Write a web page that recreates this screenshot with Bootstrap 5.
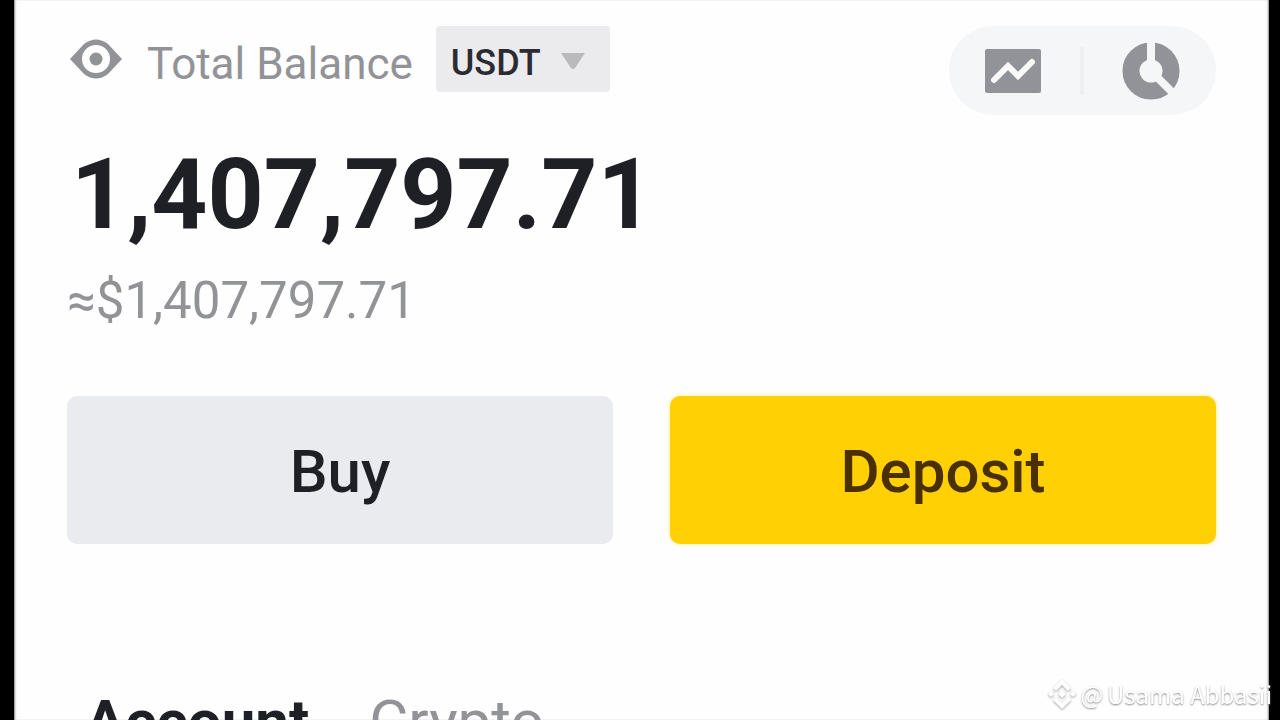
<!DOCTYPE html>
<html lang="en">
<head>
<meta charset="utf-8">
<meta name="viewport" content="width=device-width, initial-scale=1">
<title>Wallet</title>
<link href="https://cdn.jsdelivr.net/npm/bootstrap@5.3.0/dist/css/bootstrap.min.css" rel="stylesheet">
<style>
  body { font-family: Roboto, "Liberation Sans", sans-serif; color: #1e2026; background: #fefefe; }
  .wallet { border: solid #000; border-width: 0 11px 0 14px; padding: 26px 53px 0; box-shadow: inset 2px 0 2px -1px #888, inset -2px 0 2px -1px #888; }
  .muted { color: #929397; }
  .total-label { font-size: 44px; line-height: 64px; padding-top: 6px; }
  .eye-btn { padding: 12px 24px 0 2px; line-height: 0; }
  .currency { width: 174px; height: 66px; margin-left: 23px; padding: 8px 0 0 15px; border-radius: 4px;
    font-size: 36px; font-weight: 500; background-color: #ebebee; color: #2b2c31; border: 0; appearance: none; }
  .caret-mark { right: 24px; top: 26px; pointer-events: none; }
  .views { width: 267px; height: 89px; background: #f5f6f7; }
  .views .divider { width: 4px; height: 48px; background: #eeeff0; }
  .balance { font-size: 98px; line-height: 112px; margin-top: 24px; margin-left: 4px; font-weight: 700; }
  .fiat { font-size: 51px; line-height: 64px; margin-top: 18px; }
  .actions { gap: 57px; margin-top: 63px; }
  .action { height: 148px; border: 0; border-radius: 10px; font-size: 60px; font-weight: 500; padding-top: 10px; }
  .action-buy { background: #eaebef; color: #1e2026; }
  .action-deposit { background: #ffd104; color: #4a3000; box-shadow: 0 0 4px #ffe980; }
  .tabs { gap: 60px; margin-top: 144px; padding-left: 18px; font-size: 60px; line-height: 68px; }
  .tabs a { text-decoration: none; color: inherit; }
  .credit { right: 8px; bottom: 9px; font-family: "Noto Sans CJK SC", sans-serif; font-size: 24px; line-height: 34px;
    color: #fff; text-shadow: 0 1px 2px #85878c; }
  .credit svg { filter: drop-shadow(0 1px 1px #999ba0); }
</style>
</head>
<body>
<main class="wallet vh-100 overflow-hidden position-relative">
  <header class="d-flex justify-content-between align-items-start">
    <div class="d-flex align-items-start">
      <button type="button" class="btn border-0 eye-btn" aria-label="Hide balance">
        <svg width="54" height="42" viewBox="0 0 54 42"><path fill="#929397" fill-rule="evenodd" d="M1 21 15 6Q27-3 39 6L53 21 39 36Q27 45 15 36ZM27 7a14 14 0 1 0 0 28 14 14 0 1 0 0-28Z"/><circle cx="27" cy="21" r="6.5" fill="#929397"/></svg>
      </button>
      <label for="currency" class="total-label muted text-nowrap">Total Balance</label>
      <div class="position-relative">
        <select id="currency" class="currency"><option>USDT</option></select>
        <svg class="caret-mark position-absolute" width="26" height="18" viewBox="0 0 26 18"><path fill="#b9babc" d="M1 1h24L15 16q-2 2-4 0Z"/></svg>
      </div>
    </div>
    <div class="views rounded-pill d-flex align-items-center justify-content-between px-4">
      <button type="button" class="btn border-0 p-0 ms-2 ps-1 lh-1" aria-label="Profit chart">
        <svg width="56" height="44" viewBox="0 0 56 44"><rect width="56" height="44" rx="2" fill="#929398"/><path d="M9 31 23 17 33 27 47 13" fill="none" stroke="#fafafa" stroke-width="6" stroke-linecap="round"/></svg>
      </button>
      <span class="divider"></span>
      <button type="button" class="btn border-0 p-0 me-2 pe-1 lh-1" aria-label="Allocation">
        <svg width="58" height="58" viewBox="0 0 58 58"><circle cx="29" cy="29" r="20" fill="none" stroke="#929398" stroke-width="17"/><path d="M29 0V29L54 54" fill="none" stroke="#f5f6f7" stroke-width="8"/></svg>
      </button>
    </div>
  </header>
  <div class="balance">1,407,797.71</div>
  <div class="fiat muted">≈$1,407,797.71</div>
  <div class="actions d-flex">
    <button type="button" class="btn action action-buy flex-fill w-50">Buy</button>
    <button type="button" class="btn action action-deposit flex-fill w-50">Deposit</button>
  </div>
  <nav class="tabs d-flex">
    <a href="#account" class="fw-bold" aria-current="page">Account</a>
    <a href="#crypto"><span class="muted">Crypto</span></a>
  </nav>
</main>
<div class="credit position-fixed d-flex align-items-center gap-1">
  <svg width="28" height="30" viewBox="0 0 28 30" fill="#fff"><path d="M14 0 23 9 20 12 14 6 8 12 5 9ZM14 30 23 21 20 18 14 24 8 18 5 21ZM14 11 18 15 14 19 10 15ZM3 12 6 15 3 18 0 15ZM25 12 28 15 25 18 22 15Z"/></svg>
  <span><span class="me-1">@</span>Usama Abbasii</span>
</div>
<script src="https://cdn.jsdelivr.net/npm/bootstrap@5.3.0/dist/js/bootstrap.bundle.min.js"></script>
</body>
</html>
